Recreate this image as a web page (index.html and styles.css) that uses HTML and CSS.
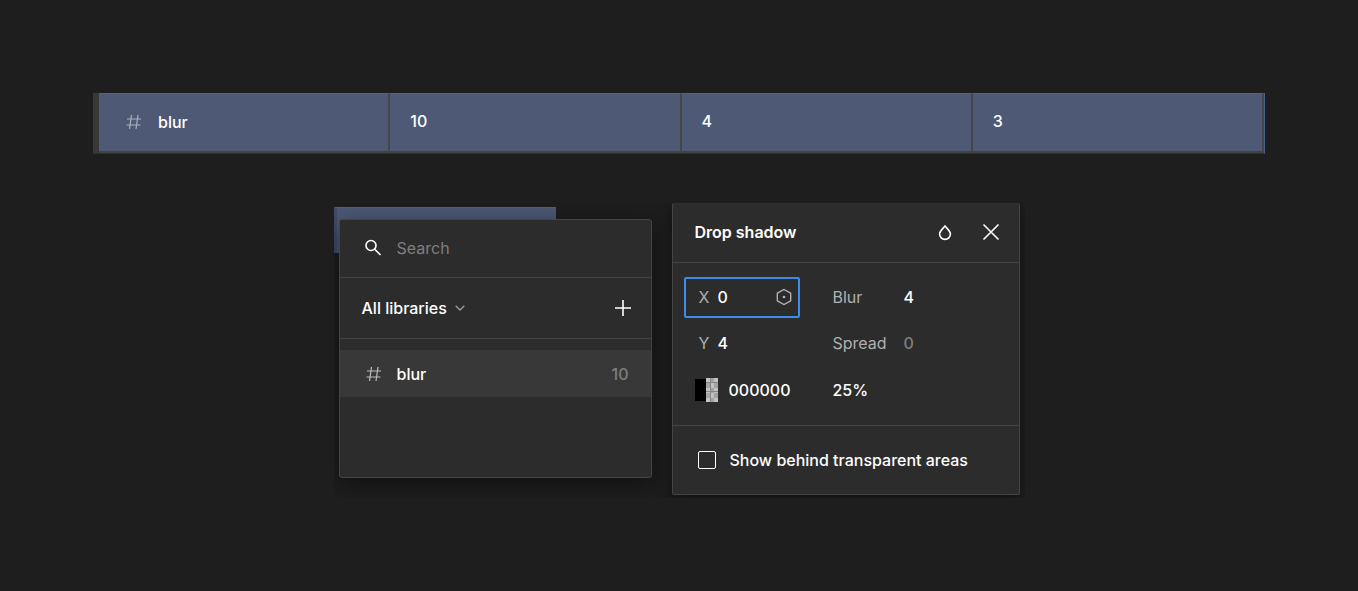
FILE: index.html
```html
<!DOCTYPE html>
<html lang="en">
<head>
<meta charset="utf-8">
<meta name="viewport" content="width=device-width, initial-scale=1">
<title>Blur variable</title>
<link rel="stylesheet" href="styles.css">
</head>
<body>
<main class="page">
  <div class="variables">
    <table class="variables-table">
      <tbody>
        <tr>
          <th scope="row">
            <span class="variable-name">
              <svg class="hash" viewBox="0 0 16 16" aria-hidden="true"><path d="M5.500 1 3.500 15M12 1l-2 14M1 5h14M.5 11h14"/></svg>
              <span>blur</span>
            </span>
          </th>
          <td>10</td>
          <td>4</td>
          <td>3</td>
        </tr>
      </tbody>
    </table>
  </div>

  <div class="panels">
    <div class="picker-stage">
      <div class="cell-behind"></div>
      <section class="picker" aria-label="Variable picker">
        <label class="search">
          <svg class="icon" viewBox="0 0 18 18" aria-hidden="true"><circle cx="7" cy="6.500" r="5"/><path d="m10.700 10.200 5.800 5.800"/></svg>
          <input type="search" placeholder="Search" aria-label="Search">
        </label>
        <div class="libraries">
          <button class="library-button" type="button">All libraries
            <svg class="chevron" viewBox="0 0 10 6" aria-hidden="true"><path d="m.7.7 4.300 4.300L9.300.7"/></svg>
          </button>
          <button class="icon-button" type="button" aria-label="Add variable">
            <svg class="icon" viewBox="0 0 18 18" aria-hidden="true"><path d="M9 1v16M1 9h16"/></svg>
          </button>
        </div>
        <button class="result" type="button">
          <svg class="hash" viewBox="0 0 16 16" aria-hidden="true"><path d="M5.500 1 3.500 15M12 1l-2 14M1 5h14M.5 11h14"/></svg>
          <span class="result-name">blur</span>
          <span class="result-value">10</span>
        </button>
      </section>
    </div>

    <section class="effect" aria-labelledby="effect-title">
      <header class="effect-header">
        <h2 id="effect-title">Drop shadow</h2>
        <button class="icon-button" type="button" aria-label="Blend mode">
          <svg class="icon" viewBox="0 0 18 18" aria-hidden="true"><path d="M9 3C7.500 5 3.600 7.800 3.600 11a5.400 5.400 0 0 0 10.800 0C14.400 7.800 10.500 5 9 3Z"/></svg>
        </button>
        <button class="icon-button" type="button" aria-label="Close">
          <svg class="icon" viewBox="0 0 18 18" aria-hidden="true"><path d="m1.500 1.500 15 15M16.500 1.500l-15 15"/></svg>
        </button>
      </header>
      <div class="fields">
        <div class="field field-focus">
          <label for="offset-x">X</label>
          <input id="offset-x" type="text" value="0">
          <button class="icon-button" type="button" aria-label="Apply variable">
            <svg class="hexagon" viewBox="0 0 18 18" aria-hidden="true"><path d="m9 1.500 6.700 3.750v7.500L9 16.500l-6.700-3.750v-7.500Z"/><circle cx="9" cy="9" r="1.300"/></svg>
          </button>
        </div>
        <div class="field field-wide">
          <label for="blur">Blur</label>
          <input id="blur" type="text" value="4">
        </div>
        <div class="field">
          <label for="offset-y">Y</label>
          <input id="offset-y" type="text" value="4">
        </div>
        <div class="field field-wide">
          <label for="spread">Spread</label>
          <input id="spread" class="is-empty" type="text" value="0">
        </div>
        <div class="color">
          <button class="swatch" type="button" aria-label="Shadow color">
            <svg viewBox="0 0 23 24" aria-hidden="true">
              <path fill="#000" d="M0 1h11v22H0z"/>
              <path fill="#c2c2c2" d="M11 0h12v24H11z"/>
              <path fill="#a3a3a3" d="M15 0h4v5h-4zM11 5h4v5h-4zM19 5h4v5h-4zM15 10h4v5h-4zM11 15h4v5h-4zM19 15h4v5h-4zM15 20h4v4h-4z"/>
              <path fill="none" stroke="#858585" d="M15.500 0v24M11 4.500h12M11 13.500h12"/>
            </svg>
          </button>
          <input type="text" value="000000" aria-label="Hex color">
        </div>
        <input class="opacity" type="text" value="25%" aria-label="Opacity">
      </div>
      <label class="behind">
        <input type="checkbox">
        <span>Show behind transparent areas</span>
      </label>
    </section>
  </div>
</main>
</body>
</html>
```

FILE: styles.css
```css
* {
  box-sizing: border-box;
}

body {
  margin: 0;
  background: #1e1e1e;
  color: #fff;
  font: 450 16px/24px Inter, "Liberation Sans", sans-serif;
}

button,
input {
  margin: 0;
  padding: 0;
  border: 0;
  background: none;
  color: inherit;
  font: inherit;
}

input {
  min-width: 0;
  outline: 0;
}

svg {
  display: block;
  fill: none;
  stroke: currentColor;
}

.page {
  padding: 93px;
}

.variables {
  padding-left: 6px;
  border-right: 1px solid #4a6088;
  border-bottom: 1px solid #303030;
  background: #383838;
}

.variables-table {
  width: 100%;
  border-collapse: separate;
  border-spacing: 0;
  table-layout: fixed;
}

.variables-table th,
.variables-table td {
  height: 60px;
  padding: 0 20px 4px;
  border-top: 1px solid #5a6580;
  border-right: 2px solid #464648;
  border-bottom: 2px solid #434343;
  background: #4d5975;
  font-weight: inherit;
  text-align: left;
}

.variables-table th {
  padding: 0 27px 2px;
}

.variable-name {
  display: flex;
  align-items: center;
  gap: 16px;
}

.hash {
  width: 16px;
  height: 16px;
  color: #bcbcbc;
  stroke-width: 1.2;
}

.variable-name .hash {
  color: #a9afbd;
}

.icon {
  width: 18px;
  height: 18px;
  stroke-width: 1.6;
}

.icon-button {
  display: grid;
  place-items: center;
  width: 18px;
  height: 24px;
}

.panels {
  display: flex;
  width: fit-content;
  margin: 49px auto 0;
  padding-right: 5px;
  overflow: hidden;
}

.picker-stage {
  position: relative;
  padding: 16px 20px 20px 5px;
}

.cell-behind {
  position: absolute;
  top: 4px;
  left: 0;
  width: 222px;
  height: 46px;
  border-top: 1px solid #56617c;
  border-left: 3px solid #424c65;
  background: #4d5975;
}

.picker {
  position: relative;
  width: 313px;
  height: 259px;
  border: 1px solid #444;
  border-radius: 3px;
  background: #2c2c2c;
  box-shadow: 0 6px 24px rgba(0, 0, 0, 0.5);
}

.search {
  display: flex;
  align-items: center;
  gap: 15px;
  height: 58px;
  padding: 0 24px 2px;
  border-bottom: 1px solid #444;
}

.search input {
  flex: 1;
  appearance: none;
  font-weight: 400;
}

.search input::placeholder {
  color: #7e7e7e;
  opacity: 1;
}

.libraries {
  display: flex;
  align-items: center;
  justify-content: space-between;
  height: 61px;
  padding: 0 19px 0 22px;
  border-bottom: 1px solid #444;
}

.library-button {
  display: flex;
  align-items: center;
  gap: 8px;
}

.chevron {
  width: 10px;
  height: 6px;
  color: #9c9c9c;
  stroke-width: 1.3;
}

.result {
  display: flex;
  align-items: center;
  gap: 15px;
  width: 100%;
  height: 47px;
  margin-top: 11px;
  padding: 0 22px 0 26px;
  background: #383838;
}

.result-value {
  margin-left: auto;
  color: #7e7e7e;
}

.effect {
  position: relative;
  align-self: flex-start;
  width: 348px;
  border: 1px solid #444;
  border-top-color: #2f2f2f;
  border-radius: 2px;
  background: #2c2c2c;
  box-shadow: 0 4px 16px rgba(0, 0, 0, 0.45);
}

.effect-header {
  display: flex;
  align-items: center;
  gap: 28px;
  height: 59px;
  padding: 0 19px 2px 22px;
  border-bottom: 1px solid #444;
}

.effect-header h2 {
  flex: 1;
  margin: 0;
  font-size: 16px;
  font-weight: 600;
}

.fields {
  display: grid;
  grid-template-columns: 116px 1fr;
  grid-template-rows: 41px 51px 44px;
  column-gap: 33px;
  align-items: center;
  padding: 14px 11px 12px;
  border-bottom: 1px solid #444;
}

.field {
  display: flex;
  align-items: center;
  height: 41px;
  padding: 0 5px 2px 13px;
  border: 2px solid transparent;
  border-radius: 2px;
}

.field-focus {
  border-color: #3c8cea;
}

.field label {
  width: 19px;
  color: #b0b0b0;
  font-weight: 400;
}

.field input {
  flex: 1;
}

.field-wide {
  padding: 0 0 2px;
  border: 0;
}

.field-wide label {
  width: 71px;
}

.field .is-empty {
  color: #7e7e7e;
}

.hexagon {
  width: 18px;
  height: 18px;
  color: #b8b8b8;
  stroke-width: 1.3;
}

.hexagon circle {
  fill: currentColor;
  stroke: none;
}

.color {
  display: flex;
  align-items: center;
  gap: 11px;
  padding: 0 0 2px 11px;
}

.swatch svg {
  width: 23px;
  height: 24px;
  stroke: none;
}

.color input {
  flex: 1;
}

.opacity {
  width: 80px;
  padding-bottom: 2px;
}

.behind {
  display: flex;
  align-items: center;
  gap: 14px;
  height: 68px;
  padding: 0 25px;
}

.behind input {
  appearance: none;
  width: 18px;
  height: 18px;
  border: 1px solid #fff;
  border-radius: 2px;
}
```
